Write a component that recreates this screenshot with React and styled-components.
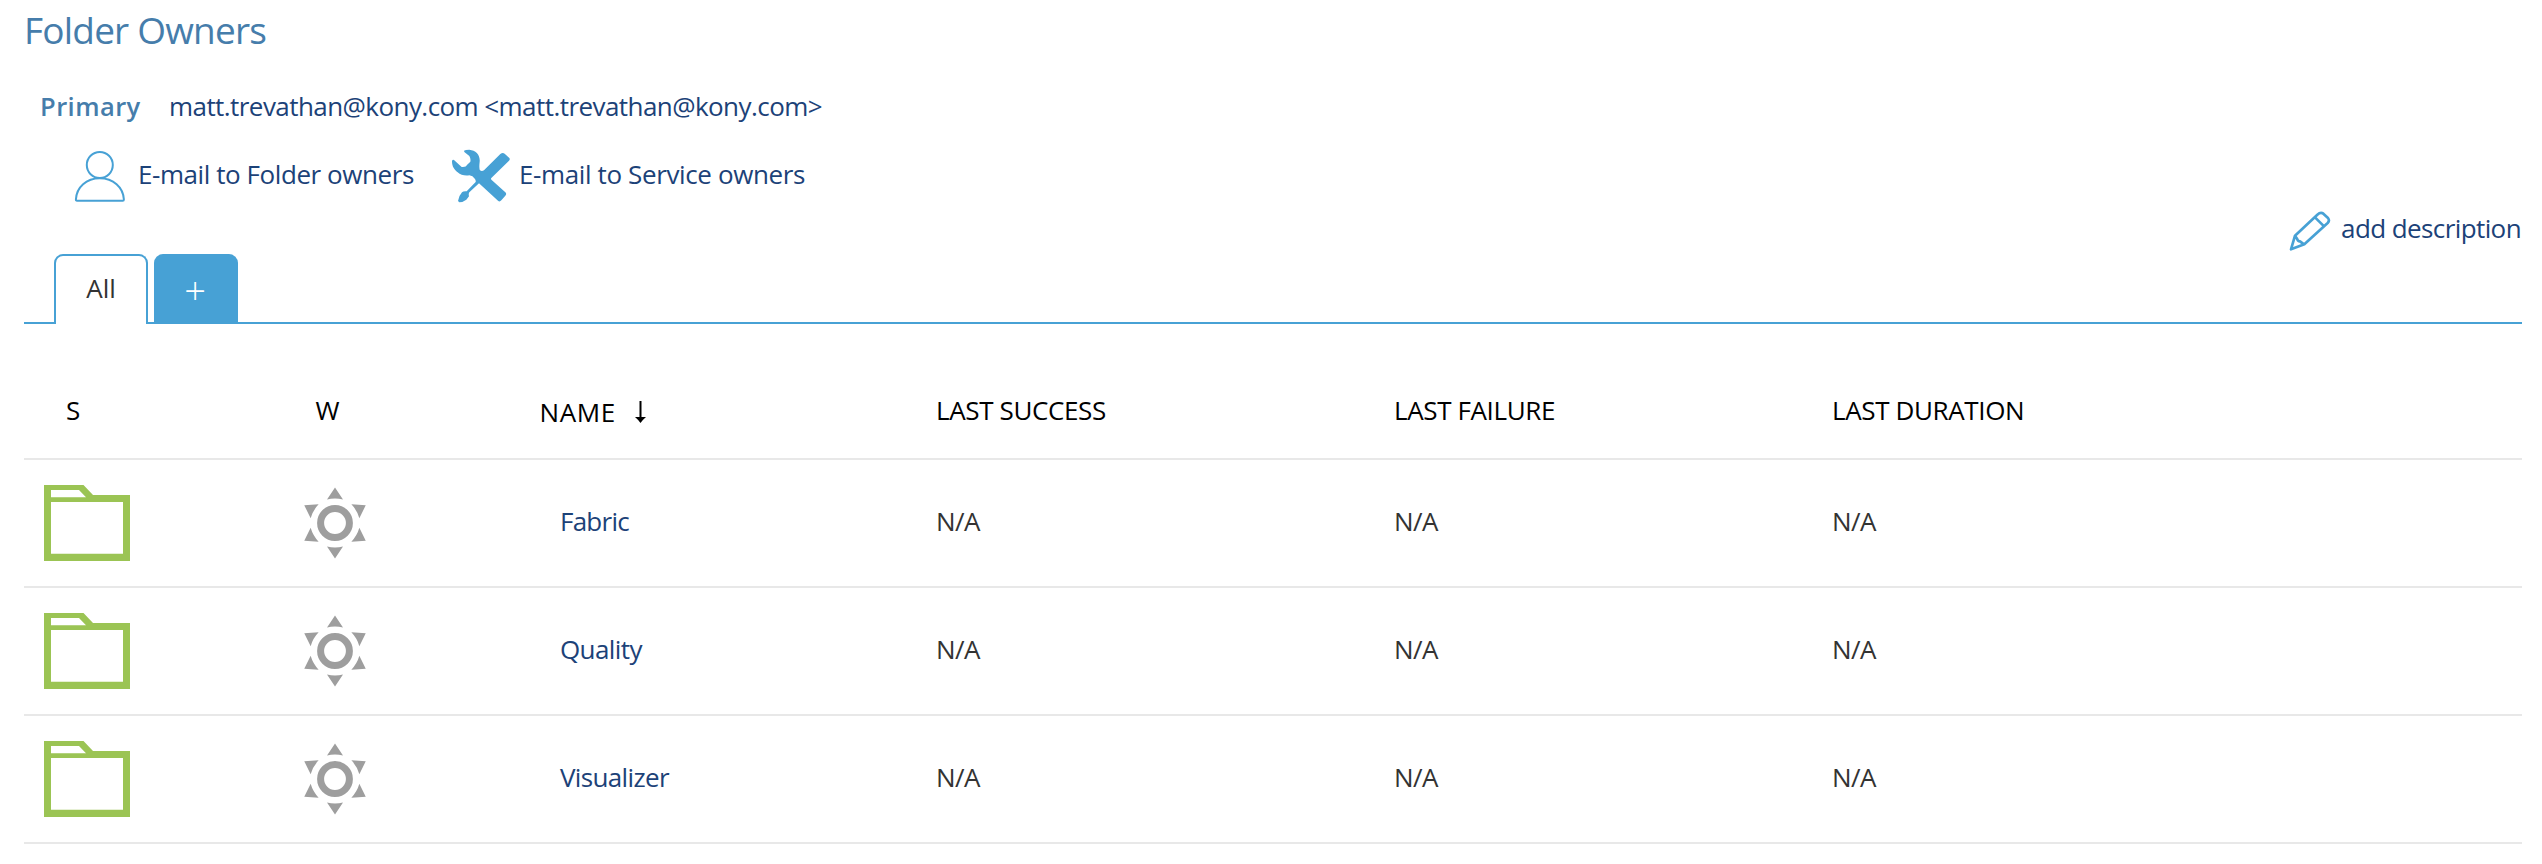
import React from 'react';
import styled, { createGlobalStyle } from 'styled-components';

const blue = '#47a1d5';
const navy = '#1c4278';

const Global = createGlobalStyle`
  * { box-sizing: border-box; }
  body {
    margin: 0;
    background: #fff;
    color: #333;
    font: 400 26px/36px "Open Sans", "Noto Sans", sans-serif;
    letter-spacing: -0.5px;
  }
`;

const Page = styled.main`
  display: flex;
  flex-direction: column;
  height: 864px;
  padding: 0 20px 0 24px;
`;

const Title = styled.h1`
  margin: 0;
  height: 88px;
  font-size: 37px;
  font-weight: 400;
  line-height: 60px;
  letter-spacing: -0.8px;
  color: #467dab;
`;

const OwnerRow = styled.div`
  display: flex;
  height: 60px;
  padding-left: 16px;
`;

const OwnerLabel = styled.span`
  width: 129px;
  font-weight: 600;
  font-size: 25.5px;
  letter-spacing: 0.45px;
  color: #467dab;
`;

const Link = styled.a`
  color: ${navy};
  letter-spacing: ${(p) => p.$track ?? -0.5}px;
  white-space: nowrap;
`;

const MailRow = styled.div`
  display: flex;
  height: 56px;
  padding-left: 49px;
`;

const MailItem = styled.div`
  display: flex;
  width: ${(p) => p.$width}px;
  gap: ${(p) => p.$gap}px;
  align-items: flex-start;

  a { line-height: 52px; }
`;

const DescriptionRow = styled.div`
  display: flex;
  justify-content: flex-end;
  align-items: flex-start;
  gap: 9px;
  height: 50px;
  padding: 6px 0 0;

  a { padding-right: 1px; }
`;

const Tabs = styled.nav`
  display: flex;
  height: 70px;

  &::before {
    content: '';
    width: 30px;
    border-bottom: 2px solid ${blue};
  }
`;

const Tab = styled.div`
  width: 94px;
  border: 2px solid ${blue};
  border-bottom: 0;
  border-radius: 9px 9px 0 0;
  line-height: 64px;
  text-align: center;
  letter-spacing: 0;
`;

const TabGap = styled.div`
  width: 6px;
  border-bottom: 2px solid ${blue};
`;

const AddTab = styled.div`
  width: 84px;
  border-radius: 9px 9px 0 0;
  background: ${blue};
  color: #fff;
  font-size: 38px;
  line-height: 72px;
  font-weight: 300;
  text-align: center;
  letter-spacing: 0;
  padding-right: 2px;
`;

const TabFill = styled.div`
  flex: 1;
  border-bottom: 2px solid ${blue};
`;

const Table = styled.div`
  padding-top: 38px;
`;

const Row = styled.div`
  display: grid;
  grid-template-columns: 260px 240px 412px 458px 438px 1fr;
  align-items: center;
  height: ${(p) => (p.$head ? 98 : 128)}px;
  border-bottom: 2px solid #e8e8e8;
`;

const Head = styled.div`
  display: flex;
  align-items: center;
  gap: 18px;
  padding: ${(p) => p.$drop ?? 0}px 0 0 ${(p) => p.$inset ?? 0}px;
  color: #000;
  letter-spacing: ${(p) => p.$track ?? -0.37}px;
`;

const Cell = styled.div`
  padding: 0 0 4px ${(p) => p.$inset ?? 0}px;
`;

const IconCell = styled.div`
  display: flex;
  padding-left: ${(p) => p.$inset}px;
`;

const PersonIcon = () => (
  <svg width="52" height="56" viewBox="73 148 52 56" fill="none" stroke={blue} strokeWidth="2">
    <circle cx="99.8" cy="165" r="13" />
    <path d="M77 200.8Q75.8 200.8 75.9 199.5C76.5 187 86.500 178.300 99.800 178.300S123.200 187 123.900 199.500Q123.900 200.800 122.700 200.800Z" />
  </svg>
);

const ToolsIcon = () => (
  <svg width="62" height="56" viewBox="30 24 186 168" fill={blue}>
    <path d="M72 32Q76 29 88 29C108 31 121 45 119 65Q117 81 119 89Q124 96 132 91L181 42Q188 36 194 41L208 54Q211 58 207 62L154 114Q151 117 155 120L196 157Q201 162 196 167L184 181Q179 187 174 182L117 130L88 157Q85 162 87 169L79 179Q68 187 58 187L54 183Q56 168 66 157Q70 153 80 154L107 126Q108 122 105 117Q98 107 88 106C74 108 62 105 53 97C42 88 36 79 36 63Q38 57 42 60L65 81Q79 82 80 76L91 65Q93 57 88 48L73 36Z" />
  </svg>
);

const PencilIcon = () => (
  <svg width="43" height="42" viewBox="87 60 129 126" fill="none" stroke={blue} strokeWidth="8" strokeLinejoin="round">
    <path d="M93 178L105 137L172 74Q182 65 190 71L204 84Q210 92 203 99L133 163ZM165 82L190 107M105 137L112 148Q113 154 120 154L133 164" />
  </svg>
);

const ArrowIcon = () => (
  <svg width="13" height="22" viewBox="0 0 13 22">
    <path d="M5.500 0H7.500V16H12Q9 18.500 6.500 22Q4 18.500 1 16H5.500Z" />
  </svg>
);

const FolderIcon = () => (
  <svg width="86" height="76" viewBox="0 0 86 76" fill="#9bc454" fillRule="evenodd">
    <path d="M0 0H39.500L49 10H86V76H0ZM7 5V12.200H42L35 5ZM7 17V68.700H79V17Z" />
  </svg>
);

const WeatherIcon = () => (
  <svg width="62" height="72" viewBox="-31 -36 62 72" fill="#9e9e9e">
    <circle r="14.400" fill="none" stroke="#9e9e9e" strokeWidth="7" />
    {[0, 60, 120, 180, 240, 300].map((a) => (
      <path key={a} transform={`rotate(${a})`} d="M0 -35.500L8 -23.500Q0 -25.500 -8 -23.500Z" />
    ))}
  </svg>
);

const folders = [
  { name: 'Fabric', track: -0.75 },
  { name: 'Quality', track: -0.6 },
  { name: 'Visualizer', track: -0.65 },
];

export default function App() {
  return (
    <Page>
      <Global />
      <Title>Folder Owners</Title>
      <OwnerRow>
        <OwnerLabel>Primary</OwnerLabel>
        <Link $track={-0.56}>matt.trevathan@kony.com &lt;matt.trevathan@kony.com&gt;</Link>
      </OwnerRow>
      <MailRow>
        <MailItem $width={377} $gap={13}>
          <PersonIcon />
          <Link $track={-0.43}>E-mail to Folder owners</Link>
        </MailItem>
        <MailItem $width={360} $gap={7}>
          <ToolsIcon />
          <Link $track={-0.38}>E-mail to Service owners</Link>
        </MailItem>
      </MailRow>
      <DescriptionRow>
        <PencilIcon />
        <Link $track={-0.6}>add description</Link>
      </DescriptionRow>
      <Tabs>
        <Tab>All</Tab>
        <TabGap />
        <AddTab>+</AddTab>
        <TabFill />
      </Tabs>
      <Table>
        <Row $head>
          <Head $inset={42}>S</Head>
          <Head $inset={31.5}>W</Head>
          <Head $inset={15.5} $drop={4} $track={0.6}>NAME<ArrowIcon /></Head>
          <Head>LAST SUCCESS</Head>
          <Head>LAST FAILURE</Head>
          <Head>LAST DURATION</Head>
        </Row>
        {folders.map(({ name, track }) => (
          <Row key={name}>
            <IconCell $inset={20}><FolderIcon /></IconCell>
            <IconCell $inset={20}><WeatherIcon /></IconCell>
            <Cell $inset={36}><Link $track={track}>{name}</Link></Cell>
            <Cell>N/A</Cell>
            <Cell>N/A</Cell>
            <Cell>N/A</Cell>
          </Row>
        ))}
      </Table>
    </Page>
  );
}
